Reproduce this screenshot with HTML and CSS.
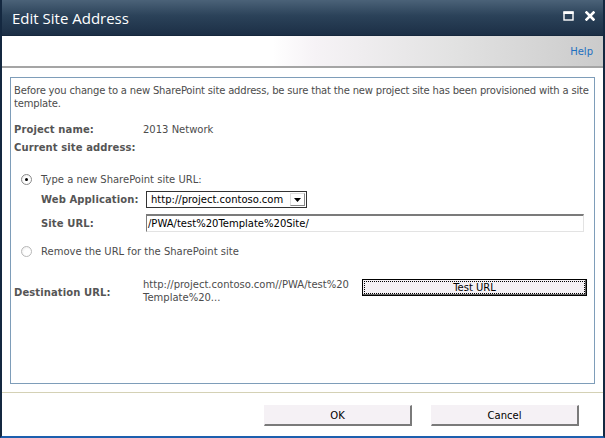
FILE: index.html
```html
<!DOCTYPE html>
<html>
<head>
<meta charset="utf-8">
<link rel="stylesheet" href="styles.css">
</head>
<body>
<div class="dialog">
  <div class="titlebar">
    <span class="title">Edit Site Address</span>
    <span class="tb-icons">
      <svg width="11" height="10" viewBox="0 0 11 10"><rect x="1" y="1" width="9" height="8" fill="none" stroke="#fff" stroke-width="1.4"/><rect x="0.5" y="0.5" width="10" height="2.5" fill="#fff"/></svg>
      <svg width="10" height="10" viewBox="0 0 10 10"><path d="M1.5 1.5 L8.5 8.5 M8.5 1.5 L1.5 8.5" stroke="#fff" stroke-width="2.6" stroke-linecap="square"/></svg>
    </span>
  </div>
  <div class="ribbon"><a class="help">Help</a></div>
  <div class="body">
    <div class="box">
      <p class="intro">Before you change to a new SharePoint site address, be sure that the new project site has been provisioned with a site template.</p>
      <div class="row"><span class="lbl">Project name:</span><span class="val">2013 Network</span></div>
      <div class="row"><span class="lbl">Current site address:</span></div>
      <div class="opt">
        <span class="radio checked"></span><span>Type a new SharePoint site URL:</span>
      </div>
      <div class="sub">
        <div class="subrow"><span class="sublbl">Web Application:</span>
          <span class="select"><span class="selval">http://project.contoso.com</span><span class="arrow"><svg width="7" height="4" viewBox="0 0 7 4"><path d="M0 0h7L3.5 4z" fill="#000"/></svg></span></span>
        </div>
        <div class="subrow"><span class="sublbl">Site URL:</span>
          <span class="input">/PWA/test%20Template%20Site/</span>
        </div>
      </div>
      <div class="opt opt2">
        <span class="radio"></span><span>Remove the URL for the SharePoint site</span>
      </div>
      <div class="dest">
        <span class="lbl">Destination URL:</span>
        <span class="destval">http://project.contoso.com//PWA/test%20<br>Template%20...</span>
        <button class="testbtn"><span class="focus">Test URL</span></button>
      </div>
    </div>
  </div>
  <div class="footer">
    <button class="btn">OK</button>
    <button class="btn">Cancel</button>
  </div>
</div>
</body>
</html>
```
FILE: styles.css
```css
html, body { margin: 0; padding: 0; }
body { width: 605px; height: 438px; overflow: hidden; background: #fff; font-family: "DejaVu Sans", Verdana, sans-serif; font-size: 10px; color: #4c4c4c; }
.dialog { width: 605px; height: 438px; box-sizing: border-box; border-left: 2px solid #142840; border-right: 2px solid #142840; border-bottom: 2px solid #1d5fae; display: flex; flex-direction: column; }
.titlebar { height: 36px; flex: none; background: linear-gradient(#4b6278, #2b4259 45%, #1c2f46); display: flex; align-items: center; justify-content: space-between; padding: 0 8px 0 10px; border-bottom: 1px solid #16283d; box-sizing: border-box; }
.title { color: #fff; font-family: "Open Sans", "DejaVu Sans", sans-serif; font-size: 15px; }
.tb-icons { display: flex; gap: 11px; margin-top: -3px; align-items: center; }
.ribbon { height: 32px; flex: none; background: linear-gradient(90deg, #fff 0%, #fff 45%, #f6f3f6 52%, #e2e2e2 75%, #cbcbcb 100%); border-bottom: 2px solid #a5a5a5; box-sizing: border-box; display: flex; justify-content: flex-end; align-items: center; padding-right: 10px; }
.help { color: #1e6fc0; font-size: 10px; }
.body { padding: 9px 8px 0 8px; flex: none; }
.box { height: 307px; border: 1px solid #7e9db9; box-sizing: border-box; padding: 6px 3px 0 3px; }
.intro { margin: 0; line-height: 13px; letter-spacing: -0.18px; }
.row { margin-top: 5px; display: flex; line-height: 13px; }
.intro + .row { margin-top: 13px; }
.lbl { font-weight: bold; color: #555; width: 129px; flex: none; letter-spacing: 0.1px; }
.opt { display: flex; align-items: center; margin: 19px 0 0 7px; line-height: 13px; }
.opt2 { margin-top: 13px; }
.radio { width: 11px; height: 11px; border: 1px solid #b8b8b8; border-radius: 50%; margin-right: 9px; box-sizing: border-box; position: relative; background: radial-gradient(circle at 60% 60%, #fff 40%, #e6e6e6 100%); }
.radio.checked { border-color: #8a8a8a; }
.radio.checked::after { content: ""; position: absolute; left: 3px; top: 3px; width: 3px; height: 3px; border-radius: 50%; background: #000; }
.sub { margin-left: 27px; margin-top: 4px; }
.subrow { display: flex; align-items: center; margin-top: 5px; }
.subrow + .subrow { margin-top: 6px; }
.sublbl { width: 105px; font-weight: bold; color: #555; flex: none; letter-spacing: 0.1px; }
.select { width: 161px; height: 17px; border: 1px solid #333; box-sizing: border-box; display: flex; align-items: center; justify-content: space-between; color: #000; background: #fff; }
.selval { padding-left: 4px; }
.arrow { width: 15px; height: 13px; border: 1px solid #888; border-left-color: #ddd; border-top-color: #ddd; margin-right: 1px; display: flex; align-items: center; justify-content: center; box-sizing: border-box; }
.input { width: 438px; height: 18px; border: 1px solid #e3e3e3; border-top: 2px solid #7b7b7b; border-left: 1px solid #7b7b7b; box-sizing: border-box; color: #000; padding-left: 1px; line-height: 15px; }
.dest { display: flex; align-items: flex-start; margin-top: 20px; line-height: 13px; }
.dest .lbl { margin-top: 8px; }
.destval { width: 219px; flex: none; }
.testbtn { margin-top: 1px; width: 225px; height: 17px; border: 1px solid #000; background: #f4f0f4; padding: 1px; box-shadow: inset -1px -1px 0 #666; font-family: inherit; font-size: 10px; color: #000; }
.focus { display: block; height: 13px; border: 1px dotted #000; line-height: 12px; box-sizing: border-box; }
.footer { flex: 1; border-top: 1px solid #d4d1b5; margin-top: 8px; display: flex; justify-content: flex-end; gap: 19px; padding: 12px 24px 0 0; align-items: flex-start; }
.btn { width: 148px; height: 21px; background: #f5f1f5; border: 1px solid #f5f1f5; border-right: 2px solid #7a7a7a; border-bottom: 2px solid #7a7a7a; font-family: inherit; font-size: 10px; color: #000; }
```
